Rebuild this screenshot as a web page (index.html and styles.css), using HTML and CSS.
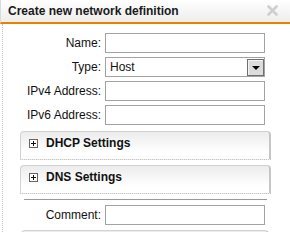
FILE: index.html
```html
<!DOCTYPE html>
<html lang="en">
<head>
  <meta charset="UTF-8">
  <meta name="viewport" content="width=device-width, initial-scale=1.0">
  <title>Create new network definition</title>
  <link rel="stylesheet" href="styles.css">
</head>
<body>
  <div class="dialog">
    <div class="dialog-header">
      <span class="dialog-title">Create new network definition</span>
      <svg class="close-icon" width="11" height="11" viewBox="0 0 11 11">
        <path d="M1.5 1.5 L9.5 9.5 M9.5 1.5 L1.5 9.5" stroke="#cfcfcf" stroke-width="2.6" stroke-linecap="round"/>
      </svg>
    </div>

    <div class="dialog-body">
      <div class="fields">
        <div class="form-row">
          <label>Name:</label>
          <input class="text-input" type="text">
        </div>
        <div class="form-row">
          <label>Type:</label>
          <div class="select-box">
            <span>Host</span>
            <span class="select-button"><span class="arrow"></span></span>
          </div>
        </div>
        <div class="form-row">
          <label>IPv4 Address:</label>
          <input class="text-input" type="text">
        </div>
        <div class="form-row">
          <label>IPv6 Address:</label>
          <input class="text-input" type="text">
        </div>
      </div>

      <div class="section">
        <div class="section-title"><span class="plus-icon"></span>DHCP Settings</div>
      </div>
      <div class="section">
        <div class="section-title"><span class="plus-icon"></span>DNS Settings</div>
      </div>

      <div class="separator"></div>

      <div class="form-row comment-row">
        <label>Comment:</label>
        <input class="text-input" type="text">
      </div>

      <div class="section section-last"></div>
    </div>
  </div>
</body>
</html>
```

FILE: styles.css
```css
* {
  margin: 0;
  padding: 0;
  box-sizing: border-box;
}
body {
  font-family: "Liberation Sans", Arial, sans-serif;
  font-size: 12px;
  color: #111;
  background-color: #ffffff;
  overflow: hidden;
}

.dialog {
  width: 290px;
  height: 232px;
  overflow: hidden;
}

.dialog-header {
  display: flex;
  align-items: center;
  justify-content: space-between;
  height: 24px;
  padding-left: 8px;
  border-left: 1px solid #dadada;
  border-bottom: 2px solid #e98200;
  background: linear-gradient(#ffffff, #ededed);
}
.dialog-title {
  font-weight: bold;
  line-height: 22px;
  color: #1a1a1a;
  margin-left: -1px;
}
.close-icon {
  margin-right: 12px;
  margin-top: -1px;
}

.dialog-body {
  margin-left: 2px;
  border-left: 1px dotted #c4c4c4;
  padding-top: 9px;
  height: 208px;
  overflow: hidden;
}

.fields {
  display: flex;
  flex-direction: column;
  gap: 4px;
}
.form-row {
  display: flex;
  align-items: center;
  gap: 4px;
  height: 20px;
}
.form-row label {
  width: 98px;
  text-align: right;
  color: #111;
}
.text-input {
  width: 160px;
  height: 20px;
  border: 1px solid #a3a3a3;
  background: #fff;
  outline: none;
}

.select-box {
  display: flex;
  align-items: center;
  justify-content: space-between;
  width: 160px;
  height: 20px;
  padding-left: 4px;
  border: 1px solid #a3a3a3;
  background: #fff;
}
.select-button {
  display: flex;
  align-items: center;
  justify-content: center;
  width: 17px;
  height: 17px;
  border: 1px solid #6f6f6f;
  background: #dcdcdc;
  box-shadow: inset 1px 1px 0 #f4f4f4;
}
.arrow {
  width: 0;
  height: 0;
  margin-top: 2px;
  border-left: 4px solid transparent;
  border-right: 4px solid transparent;
  border-top: 4px solid #000;
}

.section {
  width: 251px;
  margin: 5px 0 0 17px;
  border: 1px solid #d2d2d2;
  border-right: 2px solid #c6c6c6;
  border-bottom: 1px dotted #c4c4c4;
  border-radius: 4px 4px 0 0;
  background: linear-gradient(#ececec, #ffffff 75%);
  padding: 4px 0 9px 8px;
}
.fields + .section {
  margin-top: 6px;
}
.section-title {
  display: flex;
  align-items: center;
  gap: 8px;
  line-height: 14px;
  font-weight: bold;
  color: #111;
}
.plus-icon {
  position: relative;
  width: 9px;
  height: 9px;
  border: 1px solid #666;
  background: #fff;
}
.plus-icon::before,
.plus-icon::after {
  content: "";
  position: absolute;
  background: #111;
}
.plus-icon::before {
  left: 1px;
  top: 3px;
  width: 5px;
  height: 1px;
}
.plus-icon::after {
  left: 3px;
  top: 1px;
  width: 1px;
  height: 5px;
}

.separator {
  width: 243px;
  height: 1px;
  margin: 5px 0 0 21px;
  background: #9a9a9a;
}
.comment-row {
  margin-top: 5px;
}
.section-last {
  height: 30px;
  margin-left: 18px;
  width: 248px;
}
```
